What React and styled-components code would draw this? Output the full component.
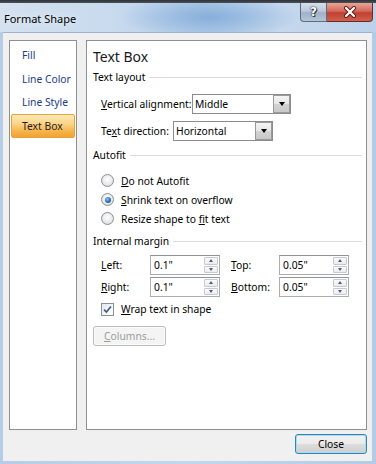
import React from "react";
import styled, { createGlobalStyle } from "styled-components";

const Global = createGlobalStyle`
  html, body { margin: 0; padding: 0; overflow: hidden; background: #fff; }
  body { font-family: "Noto Sans", "Open Sans", sans-serif; font-size: 10.3px; color: #000; }
  * { box-sizing: border-box; }
`;

const Window = styled.div`
  width: 376px;
  height: 464px;
  display: flex;
  flex-direction: column;
  background: linear-gradient(90deg, #b5cde6 0%, #c3d7ec 50%, #b3cbe4 100%);
  padding-bottom: 3px;
`;

const TopStrip = styled.div`
  height: 3px;
  background: linear-gradient(180deg, #2f3338 0%, #4a5058 100%);
  flex: none;
`;

const TitleBar = styled.div`
  height: 29px;
  flex: none;
  display: flex;
  align-items: center;
  padding-left: 4px;
  padding-right: 3px;
  background:
    radial-gradient(ellipse 90px 22px at 210px 14px, rgba(120,165,215,0.75), rgba(120,165,215,0) 100%),
    linear-gradient(90deg, #d3e1f0 0%, #c8daee 30%, #b4cde8 55%, #c5d8ed 75%, #bcd2ea 100%);
`;

const Title = styled.div`
  font-size: 11px;
  color: #000;
  text-shadow: 0 0 6px rgba(255,255,255,0.9);
  margin-top: 2px;
`;

const CaptionButtons = styled.div`
  margin-left: auto;
  align-self: flex-start;
  display: flex;
  height: 19px;
`;

const CaptionBtn = styled.div`
  width: ${p => p.$w}px;
  height: 19px;
  display: flex;
  align-items: center;
  justify-content: center;
  border: 1px solid ${p => (p.$close ? "#6b2a24" : "#5b6b80")};
  border-top: none;
  border-left: ${p => (p.$close ? "none" : undefined)};
  border-radius: ${p => (p.$close ? "0 0 4px 0" : "0 0 0 4px")};
  background: ${p =>
    p.$close
      ? "linear-gradient(180deg, #e8a598 0%, #d26a5c 45%, #c2402f 55%, #d0604e 100%)"
      : "linear-gradient(180deg, #d6e0ec 0%, #b9c8da 45%, #9fb2c9 55%, #b5c6da 100%)"};
  color: #fff;
  font-family: "DejaVu Sans", sans-serif;
  font-weight: bold;
  font-size: 12px;
  text-shadow: 0 0 1px #222, 0 0 2px #333, 1px 1px 0 #3a3a3a;
`;

const Body = styled.div`
  flex: 1;
  margin: 0 4px 0 3px;
  background: #f0f0f0;
  border-top: 1px solid #9fb4cc;
  padding: 7px 5px 7px 6px;
  display: flex;
  flex-direction: column;
`;

const Panes = styled.div`
  height: 390px;
  display: flex;
  gap: 9px;
  flex: none;
`;

const NavPane = styled.div`
  width: 68px;
  background: #fff;
  border: 1px solid #8e8f8f;
  padding: 2.5px 1px 0 1px;
  display: flex;
  flex-direction: column;
`;

const NavItem = styled.div`
  height: 23.5px;
  display: flex;
  align-items: center;
  padding-left: 10px;
  color: ${p => (p.$active ? "#1d1d1d" : "#1b3a8a")};
  border-radius: 2px;
  border: 1px solid ${p => (p.$active ? "#e5a33a" : "transparent")};
  background: ${p =>
    p.$active
      ? "linear-gradient(180deg, #fde9b8 0%, #fbd487 40%, #f6b24a 75%, #f1a233 100%)"
      : "transparent"};
  white-space: nowrap;
`;

const ContentPane = styled.div`
  flex: 1;
  background: #fff;
  border: 1px solid #8e8f8f;
  padding: 7px 4px 0 6px;
  display: flex;
  flex-direction: column;
`;

const Heading = styled.div`
  height: 18px;
  font-size: 14px;
  line-height: 18px;
  color: #1a1a1a;
`;

const Section = styled.div`
  height: 14px;
  margin-top: ${p => p.$mt}px;
  display: flex;
  align-items: center;
  gap: 4px;
  white-space: nowrap;
  &::after {
    content: "";
    flex: 1;
    height: 1px;
    background: #dcdcdc;
  }
`;

const FieldRow = styled.div`
  height: 20px;
  margin-top: ${p => p.$mt}px;
  padding-left: 8px;
  display: flex;
  align-items: center;
`;

const FieldLabel = styled.div`
  width: ${p => p.$w}px;
  margin-left: ${p => p.$ml || 0}px;
  white-space: nowrap;
  flex: none;
`;

const Key = styled.span`
  text-decoration: underline;
  text-underline-offset: 1px;
`;

const Select = styled.div`
  width: ${p => p.$w}px;
  height: 20px;
  border: 1px solid #8c8c8c;
  background: #fff;
  display: flex;
  align-items: stretch;
  flex: none;
`;

const SelectValue = styled.div`
  flex: 1;
  padding-left: 2px;
  display: flex;
  align-items: center;
`;

const DropBtn = styled.div`
  width: 17px;
  border: 1px solid #9a9a9a;
  background: linear-gradient(180deg, #f4f4f4 0%, #e6e6e6 50%, #d4d4d4 51%, #c8c8c8 100%);
  display: flex;
  align-items: center;
  justify-content: center;
`;

const Tri = styled.div`
  width: 0;
  height: 0;
  border-left: ${p => p.$s}px solid transparent;
  border-right: ${p => p.$s}px solid transparent;
  ${p => (p.$up ? "border-bottom" : "border-top")}: ${p => p.$h}px solid ${p => p.$c};
`;

const RadioGroup = styled.div`
  margin-top: 9px;
  padding-left: 8px;
  display: flex;
  flex-direction: column;
`;

const OptionRow = styled.div`
  height: ${p => p.$h || 19}px;
  margin-top: ${p => p.$mt || 0}px;
  padding-left: ${p => p.$pl || 0}px;
  display: flex;
  align-items: center;
  gap: 7px;
  white-space: nowrap;
`;

const Radio = styled.div`
  width: 13px;
  height: 13px;
  border-radius: 50%;
  border: 1px solid #8a8f96;
  background: radial-gradient(circle at 50% 40%, #ffffff 0%, #f0f0f0 40%, #cfd2d6 100%);
  display: flex;
  align-items: center;
  justify-content: center;
  flex: none;
  &::after {
    content: "";
    display: ${p => (p.$checked ? "block" : "none")};
    width: 6px;
    height: 6px;
    border-radius: 50%;
    background: radial-gradient(circle at 40% 35%, #8fc4f2 0%, #2e6db5 55%, #163f7a 100%);
  }
`;

const SpinRow = styled.div`
  height: 20px;
  margin-top: ${p => p.$mt}px;
  padding-left: 8px;
  display: flex;
  align-items: center;
`;

const Spin = styled.div`
  width: 70px;
  height: 20px;
  border: 1px solid #abadb3;
  border-top-color: #8f9299;
  background: #fff;
  display: flex;
  flex: none;
`;

const SpinValue = styled.div`
  flex: 1;
  padding-left: 3px;
  display: flex;
  align-items: center;
`;

const SpinBtns = styled.div`
  width: 16px;
  display: flex;
  flex-direction: column;
  gap: 1px;
  padding: 1px;
`;

const SpinHalf = styled.div`
  flex: 1;
  border: 1px solid #c6c9cf;
  border-radius: 1px;
  background: linear-gradient(180deg, #fbfbfb 0%, #ececec 100%);
  display: flex;
  align-items: center;
  justify-content: center;
`;

const Check = styled.div`
  width: 13px;
  height: 13px;
  border: 1px solid #8e8f8f;
  background: linear-gradient(135deg, #e6e8ec 0%, #ffffff 100%);
  display: flex;
  align-items: center;
  justify-content: center;
  flex: none;
`;

const PushButton = styled.div`
  width: ${p => p.$w}px;
  height: 20px;
  margin-top: ${p => p.$mt || 0}px;
  border-radius: 3px;
  display: flex;
  align-items: center;
  justify-content: center;
  flex: none;
  color: ${p => (p.$disabled ? "#9c9c9c" : "#000")};
  border: 1px solid ${p => (p.$disabled ? "#bcbcbc" : p.$default ? "#3c7fb1" : "#707070")};
  background: ${p =>
    p.$disabled
      ? "#f4f4f4"
      : "linear-gradient(180deg, #f2f2f2 0%, #ebebeb 49%, #dddddd 50%, #cfcfcf 100%)"};
  box-shadow: ${p => (p.$default ? "inset 0 0 0 1px #9fe0f5" : "inset 0 0 0 1px rgba(255,255,255,0.6)")};
`;

const Footer = styled.div`
  margin-top: 4px;
  display: flex;
  justify-content: flex-end;
`;

function Dropdown({ w, value }) {
  return (
    <Select $w={w}>
      <SelectValue>{value}</SelectValue>
      <DropBtn>
        <Tri $s={3.5} $h={4} $c="#000" />
      </DropBtn>
    </Select>
  );
}

function SpinBox({ value }) {
  return (
    <Spin>
      <SpinValue>{value}</SpinValue>
      <SpinBtns>
        <SpinHalf><Tri $up $s={2.5} $h={3} $c="#4a5c80" /></SpinHalf>
        <SpinHalf><Tri $s={2.5} $h={3} $c="#4a5c80" /></SpinHalf>
      </SpinBtns>
    </Spin>
  );
}

function CloseGlyph() {
  return (
    <svg width="14" height="12" viewBox="0 0 14 12">
      <path d="M3 2 L11 10 M11 2 L3 10" stroke="#5a1a14" strokeWidth="4" strokeLinecap="round" />
      <path d="M3 2 L11 10 M11 2 L3 10" stroke="#ffffff" strokeWidth="2.2" strokeLinecap="round" />
    </svg>
  );
}

const navItems = ["Fill", "Line Color", "Line Style", "Text Box"];

export default function App() {
  return (
    <>
      <Global />
      <Window>
        <TopStrip />
        <TitleBar>
          <Title>Format Shape</Title>
          <CaptionButtons>
            <CaptionBtn $w={27}>?</CaptionBtn>
            <CaptionBtn $w={46} $close><CloseGlyph /></CaptionBtn>
          </CaptionButtons>
        </TitleBar>
        <Body>
          <Panes>
            <NavPane>
              {navItems.map(n => (
                <NavItem key={n} $active={n === "Text Box"}>{n}</NavItem>
              ))}
            </NavPane>
            <ContentPane>
              <Heading>Text Box</Heading>
              <Section $mt={4}>Text layout</Section>
              <FieldRow $mt={10}>
                <FieldLabel $w={91}><Key>V</Key>ertical alignment:</FieldLabel>
                <Dropdown w={99} value="Middle" />
              </FieldRow>
              <FieldRow $mt={7}>
                <FieldLabel $w={72}>Te<Key>x</Key>t direction:</FieldLabel>
                <Dropdown w={100} value="Horizontal" />
              </FieldRow>
              <Section $mt={7}>Autofit</Section>
              <RadioGroup>
                <OptionRow><Radio /><span><Key>D</Key>o not Autofit</span></OptionRow>
                <OptionRow><Radio $checked /><span><Key>S</Key>hrink text on overflow</span></OptionRow>
                <OptionRow><Radio /><span>Resize shape to <Key>fi</Key>t text</span></OptionRow>
              </RadioGroup>
              <Section $mt={6}>Internal margin</Section>
              <SpinRow $mt={7}>
                <FieldLabel $w={49}><Key>L</Key>eft:</FieldLabel>
                <SpinBox value={"0.1\""} />
                <FieldLabel $w={48} $ml={11}><Key>T</Key>op:</FieldLabel>
                <SpinBox value={"0.05\""} />
              </SpinRow>
              <SpinRow $mt={2}>
                <FieldLabel $w={49}><Key>R</Key>ight:</FieldLabel>
                <SpinBox value={"0.1\""} />
                <FieldLabel $w={48} $ml={11}><Key>B</Key>ottom:</FieldLabel>
                <SpinBox value={"0.05\""} />
              </SpinRow>
              <OptionRow $h={14} $mt={5} $pl={8}>
                <Check>
                  <svg width="9" height="9" viewBox="0 0 9 9">
                    <path d="M1 4.6 L3.4 7 L8 1.6" fill="none" stroke="#3a5a8c" strokeWidth="1.6" />
                  </svg>
                </Check>
                <span><Key>W</Key>rap text in shape</span>
              </OptionRow>
              <PushButton $w={73} $mt={10} $disabled><span><Key>C</Key>olumns...</span></PushButton>
            </ContentPane>
          </Panes>
          <Footer>
            <PushButton $w={72} $default>Close</PushButton>
          </Footer>
        </Body>
      </Window>
    </>
  );
}
